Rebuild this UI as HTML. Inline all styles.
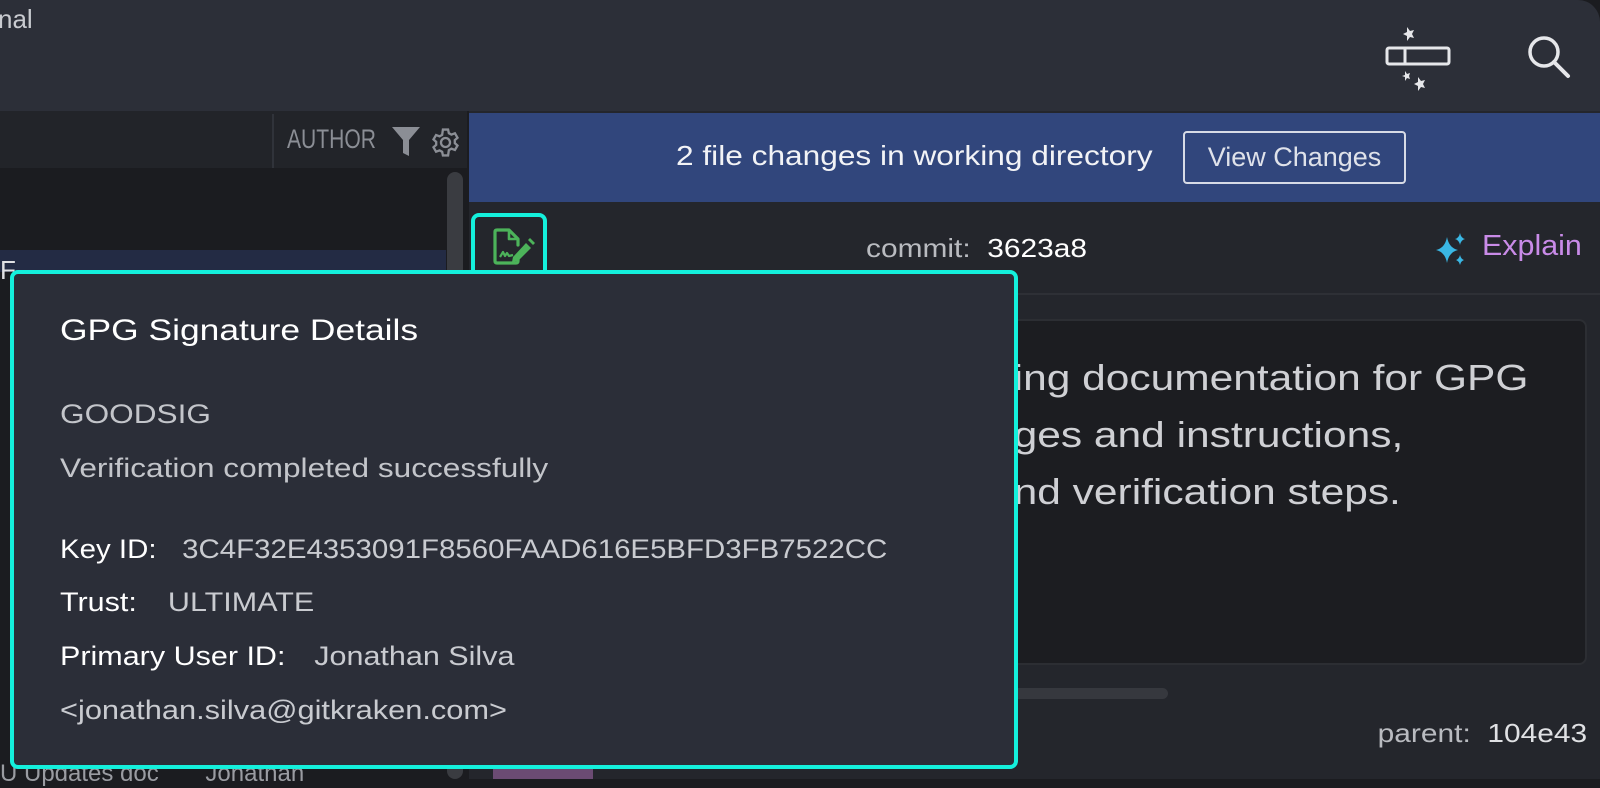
<!DOCTYPE html>
<html><head><meta charset="utf-8"><style>
*{margin:0;padding:0;box-sizing:border-box}
body{width:1600px;height:779px;overflow:hidden;background:#1b1c20;font-family:"Liberation Sans","DejaVu Sans",sans-serif;position:relative}
.a{position:absolute;white-space:nowrap}
.s{transform-origin:left center}
</style></head><body>
<!-- top bar -->
<div class="a" style="left:0;top:0;width:1600px;height:111px;background:#2c2f38;border-top-right-radius:22px"></div>
<div class="a" style="left:-2px;top:4px;color:#c9cbd0;font-size:26px">nal</div>
<svg class="a" style="left:1380px;top:22px" width="80" height="72" viewBox="0 0 80 72">
<rect x="7" y="26" width="62" height="16" rx="2" fill="none" stroke="#e6e7ea" stroke-width="3"/>
<line x1="25" y1="26" x2="25" y2="42" stroke="#e6e7ea" stroke-width="3"/>
<path d="M27 5 l3 4 l4 -1 l-2 4 l2 4 l-4 -1 l-3 4 l0 -5 l-4 -2 l4 -2z" fill="#e6e7ea"/>
<path d="M25 49 l2 3 l3 -1 l-1 3 l1 3 l-3 -1 l-2 3 l0 -4 l-3 -1 l3 -1z" fill="#e6e7ea"/>
<path d="M38 55 l3 4 l4 -1 l-2 4 l2 4 l-4 -1 l-3 4 l0 -5 l-4 -2 l4 -2z" fill="#e6e7ea"/>
</svg>
<svg class="a" style="left:1525px;top:34px" width="50" height="46" viewBox="0 0 50 46">
<circle cx="19" cy="18" r="14" fill="none" stroke="#e6e7ea" stroke-width="3.5"/>
<line x1="29" y1="28" x2="43" y2="42" stroke="#e6e7ea" stroke-width="4" stroke-linecap="round"/>
</svg>
<!-- left header -->
<div class="a" style="left:0;top:111px;width:467px;height:57px;background:#222429"></div>
<div class="a" style="left:272px;top:114px;width:2px;height:54px;background:#30333a"></div>
<div class="a s" style="left:287px;top:124px;color:#8b8e95;font-size:27px;transform:scaleX(.78)">AUTHOR</div>
<svg class="a" style="left:391px;top:126px" width="30" height="32" viewBox="0 0 30 32"><path d="M1 1 H29 L18 14 V30 L12 27 V14 Z" fill="#8b8e95"/></svg>
<svg class="a" style="left:430px;top:127px" width="31" height="31" viewBox="0 0 24 24"><path fill="none" stroke="#8b8e95" stroke-width="1.8" d="M12 8.5a3.5 3.5 0 1 0 0 7a3.5 3.5 0 1 0 0-7zM10 2h4l.6 2.8 2 1.1 2.7-1 2 3.4-2.1 1.9v2.3l2.1 1.9-2 3.4-2.7-1-2 1.1L14 22h-4l-.6-2.8-2-1.1-2.7 1-2-3.4 2.1-1.9v-2.3L2.7 9.6l2-3.4 2.7 1 2-1.1z"/></svg>
<div class="a" style="left:0;top:250px;width:446px;height:22px;background:#232b44"></div>
<div class="a" style="left:447px;top:172px;width:16px;height:607px;background:#3a3c41;border-radius:8px"></div>
<div class="a" style="left:0;top:255px;color:#e0e1e4;font-size:26px">F</div>
<div class="a" style="left:0;top:760px;color:#9a9ca2;font-size:24px">U Updates doc &nbsp;&nbsp;&nbsp;&nbsp;&nbsp; Jonathan</div>
<!-- right panel -->
<div class="a" style="left:467px;top:111px;width:1133px;height:668px;background:#24262c;border-left:2px solid #1b1c20"></div>
<div class="a" style="left:469px;top:113px;width:1131px;height:89px;background:#31467c"></div>
<div class="a s" style="left:676px;top:140px;color:#f2f3f6;font-size:28px;transform:scaleX(1.13)">2 file changes in working directory</div>
<div class="a" style="left:1183px;top:131px;width:223px;height:53px;border:2px solid #d7dbe6;border-radius:4px;color:#dfe2ea;font-size:27px;text-align:center;line-height:48px">View Changes</div>
<div class="a s" style="left:866px;top:233px;color:#b9bbc0;font-size:26px;transform:scaleX(1.15)">commit: <span style="color:#fff">&nbsp;3623a8</span></div>
<svg class="a" style="left:1436px;top:233px" width="32" height="32" viewBox="0 0 32 32"><path d="M11 4 Q13 15 22 17 Q13 19 11 30 Q9 19 0 17 Q9 15 11 4Z M24 0 Q25 5 29 6 Q25 7 24 12 Q23 7 19 6 Q23 5 24 0Z M24 22 Q25 26 28 27 Q25 28 24 32 Q23 28 20 27 Q23 26 24 22Z" fill="#3ab7e4"/></svg>
<div class="a s" style="left:1482px;top:230px;color:#c98be8;font-size:29px;transform:scaleX(1.05)">Explain</div>
<div class="a" style="left:469px;top:293px;width:1131px;height:2px;background:#2e3036"></div>
<div class="a" style="left:960px;top:319px;width:627px;height:346px;background:#1c1d21;border:2px solid #2c2e33;border-radius:8px"></div>
<div class="a s" style="left:990px;top:349px;color:#cfd0d4;font-size:36px;line-height:57px;transform:scaleX(1.18)">ding documentation for GPG<br>nges and instructions,<br>and verification steps.<br><br>.</div>
<div class="a" style="left:1000px;top:688px;width:168px;height:11px;background:#36383e;border-radius:6px"></div>
<div class="a" style="right:13px;top:718px;color:#b9bbc0;font-size:26px;transform:scaleX(1.15);transform-origin:right center">parent: <span style="color:#e0e1e4">&nbsp;104e43</span></div>
<div class="a" style="left:493px;top:768px;width:100px;height:11px;background:#6b4b73"></div>
<!-- tooltip tab -->
<div class="a" style="left:471px;top:213px;width:76px;height:62px;background:#24262c;border:4px solid #14f0dc;border-bottom:none;border-radius:8px 8px 0 0"></div>
<svg class="a" style="left:490px;top:226px" width="48" height="42" viewBox="0 0 48 42">
<path d="M28 19 V13 L19 4 H7 Q5 4 5 6 V35 Q5 37 7 37 H26 Q28 37 28 35 V33" fill="none" stroke="#4cb35a" stroke-width="3.2" stroke-linejoin="round" stroke-linecap="round"/>
<path d="M19 4 V13 H28" fill="none" stroke="#4cb35a" stroke-width="2.6" stroke-linejoin="round"/>
<path d="M10 31 L13 26 L15 30 L17 27 L19 30 L23 29" fill="none" stroke="#4cb35a" stroke-width="2.2" stroke-linejoin="round"/>
<path d="M23 31 L36 17 L41 22 L28 35 L22 36Z" fill="#4cb35a"/>
<path d="M38 14 L40 12 L45 17 L43 19Z" fill="#4cb35a"/>
</svg>
<!-- tooltip -->
<div class="a" style="left:10px;top:270px;width:1008px;height:499px;background:#2b2e38;border:4px solid #14f0dc;border-radius:8px"></div>
<div class="a" style="left:467px;top:270px;width:8px;height:4px;background:#14f0dc"></div>
<div class="a" style="left:475px;top:274px;width:68px;height:4px;background:#2b2e38"></div>
<div class="a s" style="left:60px;top:314px;color:#fff;font-size:30px;transform:scaleX(1.18)">GPG Signature Details</div>
<div class="a s" style="left:60px;top:399px;color:#c3c5ca;font-size:27px;transform:scaleX(1.17)">GOODSIG</div>
<div class="a s" style="left:60px;top:453px;color:#c3c5ca;font-size:27px;transform:scaleX(1.17)">Verification completed successfully</div>
<div class="a s" style="left:60px;top:534px;color:#fff;font-size:27px;transform:scaleX(1.09)">Key ID: <span style="color:#c9cbd0;padding-left:16px">3C4F32E4353091F8560FAAD616E5BFD3FB7522CC</span></div>
<div class="a s" style="left:60px;top:587px;color:#fff;font-size:27px;transform:scaleX(1.13)">Trust: <span style="color:#c9cbd0;padding-left:20px">ULTIMATE</span></div>
<div class="a s" style="left:60px;top:641px;color:#fff;font-size:27px;transform:scaleX(1.13)">Primary User ID: <span style="color:#c9cbd0;padding-left:18px">Jonathan Silva</span></div>
<div class="a s" style="left:60px;top:695px;color:#c9cbd0;font-size:27px;transform:scaleX(1.14)">&lt;jonathan.silva@gitkraken.com&gt;</div>
</body></html>
